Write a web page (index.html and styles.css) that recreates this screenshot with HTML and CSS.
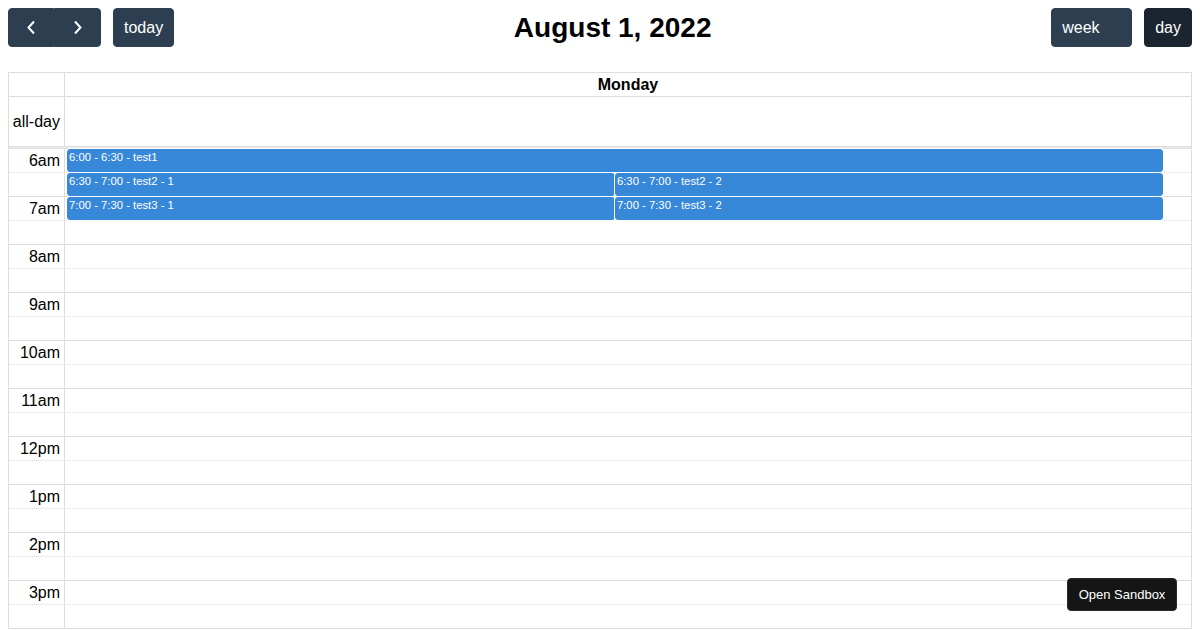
FILE: index.html
```html
<!DOCTYPE html>
<html lang="en">
<head>
    <meta charset="UTF-8">
    <meta name="viewport" content="width=device-width, initial-scale=1.0">
    <title>Calendar</title>
    <link rel="stylesheet" href="styles.css">
</head>
<body>

<div class="calendar">
    <div class="toolbar">
        <div class="chunk">
            <div class="btn-group">
                <button type="button" class="btn btn-icon btn-prev" aria-label="prev">
                    <svg width="10" height="15" viewBox="0 0 10 15"><path d="M8 1.5 L2.5 7.5 L8 13.5" fill="none" stroke="#fff" stroke-width="2"/></svg>
                </button>
                <button type="button" class="btn btn-icon btn-next" aria-label="next">
                    <svg width="10" height="15" viewBox="0 0 10 15"><path d="M2 1.5 L7.5 7.5 L2 13.5" fill="none" stroke="#fff" stroke-width="2"/></svg>
                </button>
            </div>
            <button type="button" class="btn">today</button>
        </div>
        <h2 class="title">August 1, 2022</h2>
        <div class="chunk">
            <button type="button" class="btn btn-week">week</button>
            <button type="button" class="btn active">day</button>
        </div>
    </div>

    <div class="grid">
        <div class="head">
            <div class="axis"></div>
            <div class="day-head">Monday</div>
        </div>
        <div class="allday">
            <div class="axis">all-day</div>
            <div class="lane"></div>
        </div>
        <div class="divider"></div>

        <div class="slots">
            <div class="slot major"><div class="axis">6am</div><div class="lane"></div></div>
            <div class="slot minor"><div class="axis"></div><div class="lane"></div></div>
            <div class="slot major"><div class="axis">7am</div><div class="lane"></div></div>
            <div class="slot minor"><div class="axis"></div><div class="lane"></div></div>
            <div class="slot major"><div class="axis">8am</div><div class="lane"></div></div>
            <div class="slot minor"><div class="axis"></div><div class="lane"></div></div>
            <div class="slot major"><div class="axis">9am</div><div class="lane"></div></div>
            <div class="slot minor"><div class="axis"></div><div class="lane"></div></div>
            <div class="slot major"><div class="axis">10am</div><div class="lane"></div></div>
            <div class="slot minor"><div class="axis"></div><div class="lane"></div></div>
            <div class="slot major"><div class="axis">11am</div><div class="lane"></div></div>
            <div class="slot minor"><div class="axis"></div><div class="lane"></div></div>
            <div class="slot major"><div class="axis">12pm</div><div class="lane"></div></div>
            <div class="slot minor"><div class="axis"></div><div class="lane"></div></div>
            <div class="slot major"><div class="axis">1pm</div><div class="lane"></div></div>
            <div class="slot minor"><div class="axis"></div><div class="lane"></div></div>
            <div class="slot major"><div class="axis">2pm</div><div class="lane"></div></div>
            <div class="slot minor"><div class="axis"></div><div class="lane"></div></div>
            <div class="slot major"><div class="axis">3pm</div><div class="lane"></div></div>
            <div class="slot minor"><div class="axis"></div><div class="lane"></div></div>

            <div class="events-layer">
                <div class="col-events">
                    <div class="harness" style="top: 0px; left: 0; right: 0;">
                        <div class="event">6:00 - 6:30 - test1</div>
                    </div>
                    <div class="harness" style="top: 24px; left: 0; right: 50%;">
                        <div class="event">6:30 - 7:00 - test2 - 1</div>
                    </div>
                    <div class="harness" style="top: 24px; left: 50%; right: 0;">
                        <div class="event">6:30 - 7:00 - test2 - 2</div>
                    </div>
                    <div class="harness" style="top: 48px; left: 0; right: 50%;">
                        <div class="event">7:00 - 7:30 - test3 - 1</div>
                    </div>
                    <div class="harness" style="top: 48px; left: 50%; right: 0;">
                        <div class="event">7:00 - 7:30 - test3 - 2</div>
                    </div>
                </div>
            </div>
        </div>
    </div>
</div>

<a class="sandbox-btn" href="#">Open Sandbox</a>

</body>
</html>
```

FILE: styles.css
```css
body {
    margin: 8px;
    font-family: "Liberation Sans", Arial, sans-serif;
    overflow: hidden;
}
.toolbar {
    display: flex;
    justify-content: space-between;
    align-items: center;
    height: 39px;
    margin-bottom: 25px;
}
.chunk {
    display: flex;
    align-items: center;
    gap: 12px;
}
.btn-group {
    display: flex;
}
.btn {
    box-sizing: border-box;
    height: 39px;
    padding: 0 10px;
    background-color: #2c3e50;
    border: 1px solid #2c3e50;
    border-radius: 4px;
    color: #fff;
    font-family: inherit;
    font-size: 16px;
    line-height: 24px;
}
.btn.active {
    background-color: #1a252f;
    border-color: #1a252f;
}
.btn-icon {
    display: flex;
    align-items: center;
    justify-content: center;
}
.btn-prev {
    width: 46px;
    border-radius: 4px 0 0 4px;
}
.btn-next {
    width: 47px;
    border-radius: 0 4px 4px 0;
}
.btn-week {
    width: 81px;
    text-align: left;
}
.title {
    margin: 0;
    font-size: 28px;
    font-weight: bold;
}
.grid {
    border: 1px solid #ddd;
    border-bottom: none;
}
.head,
.allday,
.slot {
    display: flex;
}
.axis {
    box-sizing: border-box;
    width: 56px;
    flex: none;
    border-right: 1px solid #ddd;
    padding: 0 4px;
    font-size: 16px;
    white-space: nowrap;
    display: flex;
    align-items: center;
    justify-content: flex-end;
}
.head {
    height: 23px;
    border-bottom: 1px solid #ddd;
}
.day-head {
    flex: 1;
    text-align: center;
    font-weight: bold;
    font-size: 16px;
    line-height: 23px;
}
.allday {
    height: 49px;
    border-bottom: 1px solid #ddd;
}
.lane {
    flex: 1;
}
.divider {
    height: 1px;
    background-color: #ededed;
    border-bottom: 1px solid #ddd;
}
.slots {
    position: relative;
}
.slot {
    box-sizing: border-box;
    height: 24px;
}
.slot.major {
    border-bottom: 1px dotted #ddd;
}
.slot.minor {
    border-bottom: 1px solid #ddd;
}
.events-layer {
    position: absolute;
    top: 0;
    bottom: 0;
    left: 56px;
    right: 0;
}
.col-events {
    position: relative;
    height: 100%;
    margin: 0 2.5% 0 2px;
}
.harness {
    position: absolute;
    height: 23px;
}
.event {
    box-sizing: border-box;
    height: 100%;
    padding: 1px 1px 0;
    background-color: #3788d8;
    border: 1px solid #3788d8;
    border-radius: 3px;
    box-shadow: 0 0 0 1px #fff;
    color: #fff;
    font-size: 11.3px;
    line-height: 13px;
    white-space: nowrap;
    overflow: hidden;
}
.sandbox-btn {
    position: fixed;
    right: 23px;
    bottom: 19px;
    box-sizing: border-box;
    width: 110px;
    height: 33px;
    line-height: 31px;
    text-align: center;
    background-color: #151515;
    border: 1px solid #2a2a2a;
    border-radius: 4px;
    color: #fff;
    font-size: 13px;
    text-decoration: none;
}
```
